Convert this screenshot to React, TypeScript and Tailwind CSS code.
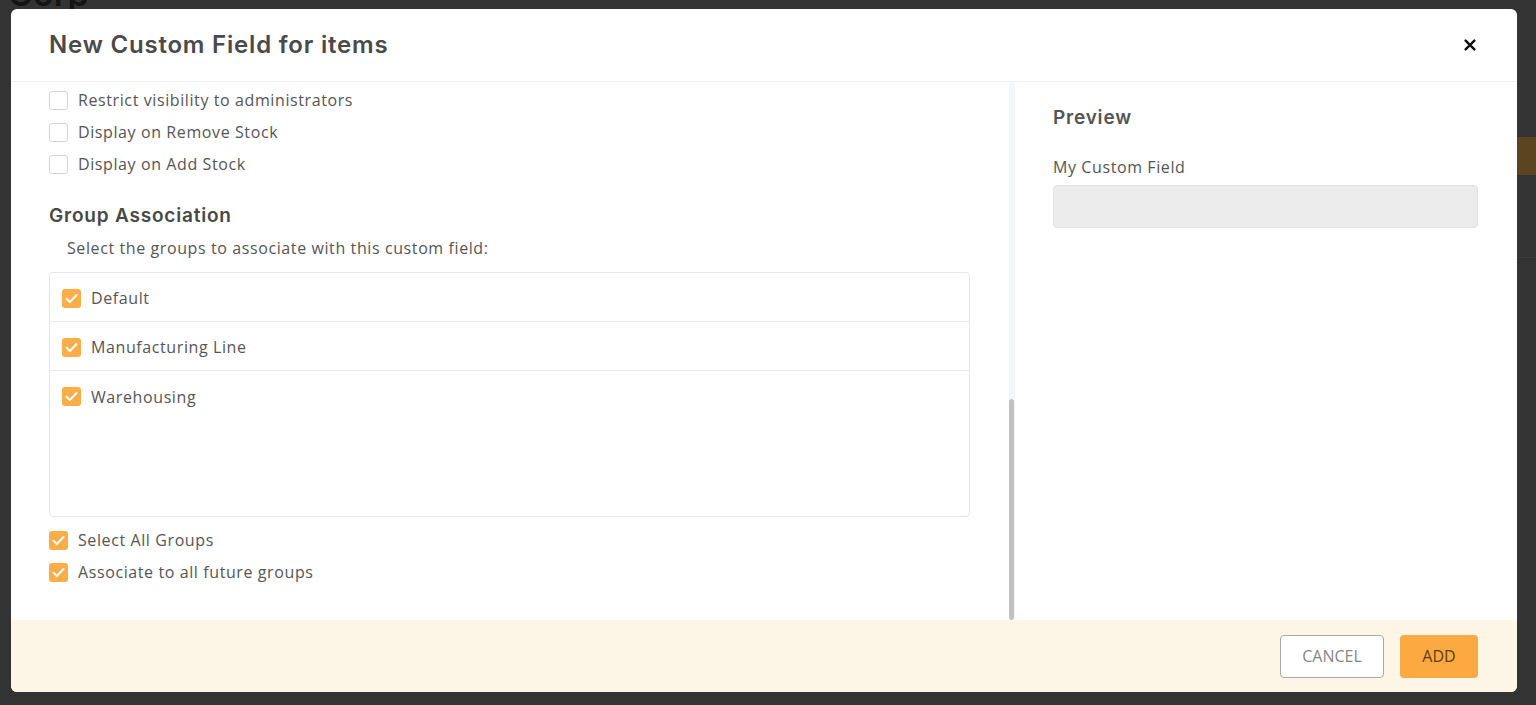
const sans = { fontFamily: '"Open Sans", "Noto Sans", Arial, sans-serif' };
const head = { fontFamily: 'Inter, "Open Sans", Arial, sans-serif' };

function Check({ checked }: { checked?: boolean }) {
  if (!checked) {
    return <span className="h-[19px] w-[19px] shrink-0 rounded-[3px] border border-[#d6d6d6] bg-white" />;
  }
  return (
    <span className="flex h-[19px] w-[19px] shrink-0 items-center justify-center rounded-[3px] bg-[#fbad48]">
      <svg viewBox="0 0 16 16" className="h-[15px] w-[15px]" fill="none" stroke="#fff" strokeWidth="2.2" strokeLinecap="round" strokeLinejoin="round">
        <path d="M2.8 8.3l3.4 3.6L13.3 4.3" />
      </svg>
    </span>
  );
}

function CheckRow({ label, checked }: { label: string; checked?: boolean }) {
  return (
    <label className="flex h-8 items-center gap-[10px] text-[16px] tracking-[0.6px] text-[#555]">
      <Check checked={checked} />
      <span>{label}</span>
    </label>
  );
}

const groups = ['Default', 'Manufacturing Line', 'Warehousing'];

export default function App() {
  return (
    <div className="relative h-[705px] w-[1536px] overflow-hidden bg-[#333333]" style={sans}>
      {/* dimmed page behind the overlay */}
      <div className="absolute left-[8px] top-[-26px] text-[34px] font-semibold leading-[40px] text-[#141414]" style={head}>Corp</div>
      <div className="absolute right-0 top-[137px] h-[38px] w-[19px] bg-[#5c4421]" />
      <div className="absolute right-0 top-[257px] h-px w-[19px] bg-[#3d3d3d]" />

      <div className="absolute left-[11px] top-[9px] flex h-[683px] w-[1506px] flex-col overflow-hidden rounded-[6px] bg-white">
        <header className="flex h-[73px] shrink-0 items-center justify-between border-b border-[#eef0f2] pl-[38px] pr-[40px]">
          <h1 className="text-[24px] font-semibold tracking-[0.8px] text-[#4a4a4a]" style={head}>New Custom Field for items</h1>
          <button className="text-[#111]">
            <svg viewBox="0 0 16 16" className="h-[14px] w-[14px]" stroke="currentColor" strokeWidth="2.8" strokeLinecap="round">
              <path d="M3 3l10 10M13 3L3 13" />
            </svg>
          </button>
        </header>

        <div className="flex min-h-0 flex-1">
          <div className="flex-1 pl-[38px] pr-[39px] pt-[2px]">
            <CheckRow label="Restrict visibility to administrators" />
            <CheckRow label="Display on Remove Stock" />
            <CheckRow label="Display on Add Stock" />

            <h2 className="mt-6 text-[19px] font-semibold leading-6 tracking-[0.8px] text-[#484848]" style={head}>Group Association</h2>
            <p className="mt-[9px] pl-[18px] text-[16px] leading-[22px] tracking-[0.6px] text-[#555]">Select the groups to associate with this custom field:</p>

            <div className="mt-[13px] h-[245px] rounded-[4px] border border-[#e6e6e6]">
              {groups.map((g) => (
                <div key={g} className="flex h-[49px] items-center gap-[10px] border-b border-[#e8e8e8] pl-[12px] pt-[2px] text-[16px] tracking-[0.6px] text-[#555] last:border-b-0">
                  <Check checked />
                  <span>{g}</span>
                </div>
              ))}
            </div>

            <div className="mt-[7px]">
              <CheckRow label="Select All Groups" checked />
              <CheckRow label="Associate to all future groups" checked />
            </div>
          </div>

          <div className="flex w-[5px] shrink-0 flex-col">
            <div className="flex-1 bg-[#f3f7fb]" />
            <div className="h-[221px] rounded-full bg-[#c1c1c3]" />
          </div>
          <div className="w-px shrink-0 bg-[#f3f6f9]" />

          <div className="w-[502px] shrink-0 pl-[38px] pr-[39px] pt-6">
            <h2 className="text-[19px] font-semibold leading-6 tracking-[0.8px] text-[#555]" style={head}>Preview</h2>
            <div className="mt-[26px] text-[16px] leading-[22px] tracking-[0.6px] text-[#555]">My Custom Field</div>
            <div className="mt-[7px] h-[43px] rounded-[4px] border border-[#e2e2e2] bg-[#ececec]" />
          </div>
        </div>

        <footer className="flex h-[72px] shrink-0 items-center justify-end gap-4 bg-[#fdf6e6] pr-[39px]">
          <button className="h-[43px] w-[104px] rounded-[4px] border border-[#a9a9a9] bg-white text-[16px] text-[#858585]">CANCEL</button>
          <button className="h-[43px] w-[78px] rounded-[4px] bg-[#fda941] text-[16px] text-[#5a3d12]">ADD</button>
        </footer>
      </div>
    </div>
  );
}
